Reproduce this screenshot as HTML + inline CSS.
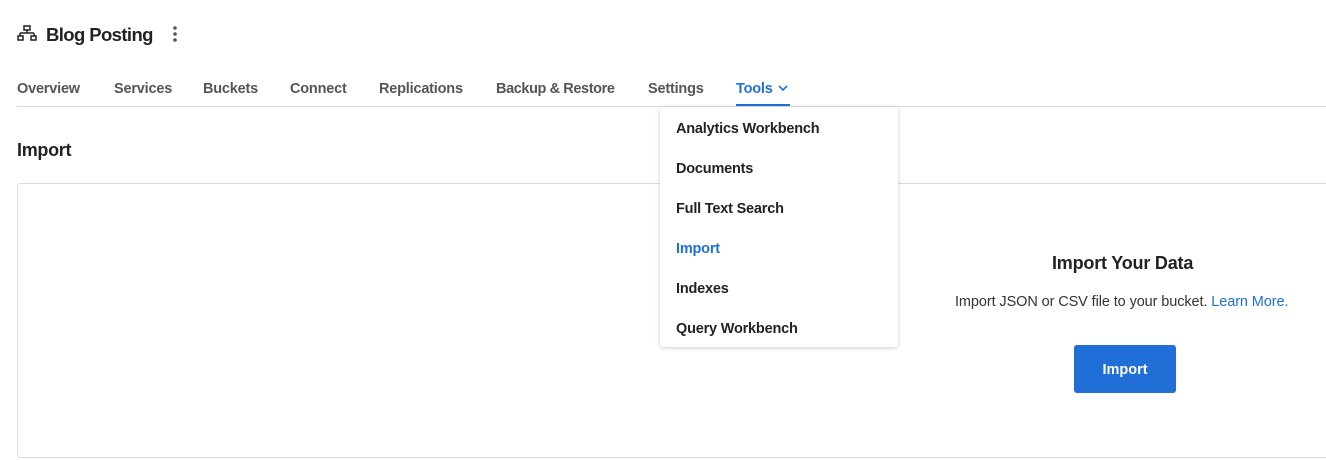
<!DOCTYPE html>
<html><head><style>
body{margin:0;width:1326px;height:460px;background:#fff;font-family:"Liberation Sans",sans-serif;position:relative;overflow:hidden;color:#222}
.a{position:absolute;white-space:nowrap}
.nav{top:81px;font-size:14.5px;font-weight:bold;color:#555;letter-spacing:-0.2px}
.mi{left:676px;font-size:14.5px;font-weight:bold;color:#222;letter-spacing:-0.2px}
</style></head><body>
<svg class="a" style="left:17px;top:25px" width="20" height="18" viewBox="0 0 20 18" fill="none" stroke="#222" stroke-width="1.5"><rect x="7" y="1" width="6" height="4"/><path d="M10 5v3M3 8h14M3 8v3M17 8v3"/><rect x="1" y="11" width="5" height="4"/><rect x="14" y="11" width="5" height="4"/></svg>
<div class="a" style="left:46px;top:24px;font-size:18.5px;font-weight:bold;color:#222;letter-spacing:-0.6px">Blog Posting</div>
<svg class="a" style="left:172px;top:25px" width="6" height="18"><circle cx="3" cy="3" r="1.8" fill="#555"/><circle cx="3" cy="9" r="1.8" fill="#555"/><circle cx="3" cy="15" r="1.8" fill="#555"/></svg>
<div class="a nav" style="left:17px">Overview</div>
<div class="a nav" style="left:114px">Services</div>
<div class="a nav" style="left:203px">Buckets</div>
<div class="a nav" style="left:290px">Connect</div>
<div class="a nav" style="left:379px">Replications</div>
<div class="a nav" style="left:496px;letter-spacing:-0.4px">Backup &amp; Restore</div>
<div class="a nav" style="left:648px">Settings</div>
<div class="a nav" style="left:736px;color:#1f6fd6">Tools</div>
<svg class="a" style="left:778px;top:84px" width="10" height="8"><path d="M1 2l4 4 4-4" stroke="#1f6fd6" stroke-width="1.6" fill="none"/></svg>
<div class="a" style="left:17px;top:106px;width:1309px;height:1px;background:#ddd"></div>
<div class="a" style="left:736px;top:104px;width:54px;height:2px;background:#1f6fd6"></div>
<div class="a" style="left:17px;top:140px;font-size:18px;font-weight:bold;color:#222;letter-spacing:-0.3px">Import</div>
<div class="a" style="left:17px;top:183px;width:1320px;height:273px;border:1px solid #ddd;border-radius:3px"></div>
<div class="a" style="left:1052px;top:253px;font-size:18px;font-weight:bold;color:#222;letter-spacing:-0.2px">Import Your Data</div>
<div class="a" style="left:955px;top:294px;font-size:14.5px;color:#333;letter-spacing:-0.1px">Import JSON or CSV file to your bucket. <span style="color:#1f6fd6">Learn More.</span></div>
<div class="a" style="left:1074px;top:345px;width:102px;height:48px;background:#1f6fd6;border-radius:3px;color:#fff;font-weight:bold;font-size:14.5px;text-align:center;line-height:50px">Import</div>
<div class="a" style="left:660px;top:107px;width:238px;height:240px;background:#fff;border-radius:3px;box-shadow:0 1px 5px rgba(0,0,0,0.2)"></div>
<div class="a mi" style="top:121px">Analytics Workbench</div>
<div class="a mi" style="top:161px">Documents</div>
<div class="a mi" style="top:201px">Full Text Search</div>
<div class="a mi" style="top:241px;color:#1f6fd6">Import</div>
<div class="a mi" style="top:281px">Indexes</div>
<div class="a mi" style="top:321px">Query Workbench</div>
</body></html>
